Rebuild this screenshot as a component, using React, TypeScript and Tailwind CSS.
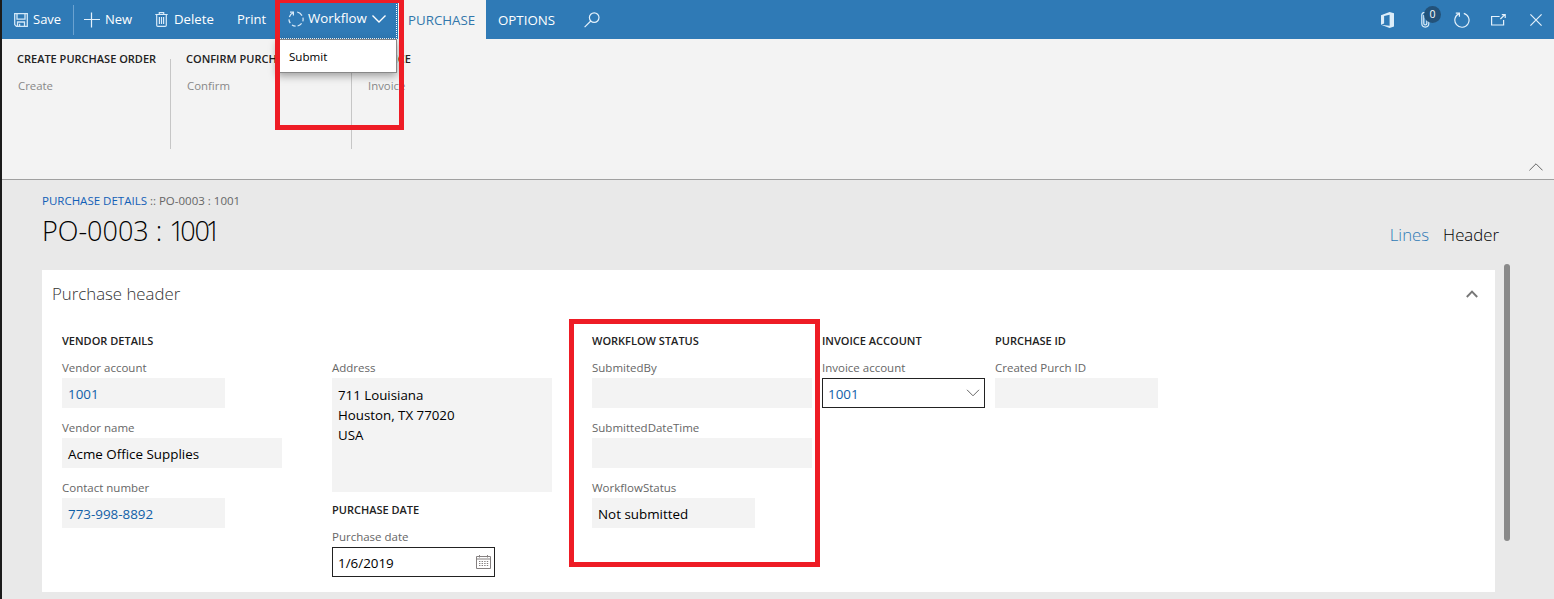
import type { ReactNode } from 'react'

function SaveIcon() {
  return (
    <svg width="14" height="14" viewBox="0 0 14 14" fill="none" stroke="#d3e8f8" strokeWidth="1.3">
      <path d="M.7 .7h12.6v12.6H2.4L.7 11.6z" />
      <path d="M3 .7v5.4h8V.7" />
      <path d="M3.5 13.4V9h7v4.4M5.6 13v-2.2" />
    </svg>
  )
}

function PlusIcon() {
  return (
    <svg width="16" height="16" viewBox="0 0 16 16" stroke="#e4f1fb" strokeWidth="1.2">
      <path d="M7.5 .5v15M0 7.5h16" />
    </svg>
  )
}

function TrashIcon() {
  return (
    <svg width="13" height="15" viewBox="0 0 13 15" fill="none" stroke="#d9ebf9" strokeWidth="1.2">
      <path d="M.3 2.5h12.4M4.3 2.4V.7h4.4v1.7M1.7 2.8v10.4c0 .8.5 1.2 1.2 1.2h7.2c.7 0 1.2-.4 1.2-1.2V2.8" />
      <path d="M4.4 5v7M6.5 5v7M8.6 5v7" />
    </svg>
  )
}

function WorkflowIcon() {
  return (
    <svg width="16" height="16" viewBox="0 0 16 16" fill="none" stroke="#d9ebf9" strokeWidth="1.2">
      <path d="M2 1.2h3.4v3.4" />
      <path d="M5.2 1.6A7 7 0 0 0 1.4 6M.9 8.4a7 7 0 0 0 1.4 3.8M4 13.9a7 7 0 0 0 3.6 1.2M9.6 15a7 7 0 0 0 4-2.6M14.8 10.4a7 7 0 0 0 .1-3.8M14 4.6A7 7 0 0 0 9.2 1" />
    </svg>
  )
}

function SearchIcon() {
  return (
    <svg width="16" height="16" viewBox="0 0 16 16" fill="none" stroke="#e4f1fb" strokeWidth="1.2">
      <circle cx="10.2" cy="5.6" r="4.8" />
      <path d="M6.8 9L.6 15.2" />
    </svg>
  )
}

function OfficeIcon() {
  return (
    <svg width="14" height="16" viewBox="0 0 14 16" fill="#dcedf9">
      <path d="M0 3.2L8.6 0 13 1.3v13.3L8.6 16 0 12.8l8.6 1V2.8L3.1 4.1v7.3L0 12.7z" />
    </svg>
  )
}

function ClipIcon() {
  return (
    <svg width="9" height="16" viewBox="0 0 9 16" fill="none" stroke="#dcedf9" strokeWidth="1.2">
      <path d="M.8 3v8.6a3.5 3.5 0 0 0 7 0V3M2.8 3v8.4a1.5 1.5 0 0 0 3 0V3M.8 3a2.5 2.5 0 0 1 5 0" />
    </svg>
  )
}

function RefreshIcon() {
  return (
    <svg width="16" height="16" viewBox="0 0 16 16" fill="none" stroke="#e4f1fb" strokeWidth="1.2">
      <path d="M1.8 1.2h3.6v3.6" />
      <path d="M5.2 1.6A7.1 7.1 0 1 0 9.8 1.3" />
    </svg>
  )
}

function PopoutIcon() {
  return (
    <svg width="15" height="12" viewBox="0 0 15 12" fill="none" stroke="#e4f1fb" strokeWidth="1.2">
      <path d="M8.6 2.5H.6v8.5h12V6" />
      <path d="M9.4 5L13.6 .9M10.8 .7h3.4v3.4" />
    </svg>
  )
}

function CloseIcon() {
  return (
    <svg width="12" height="12" viewBox="0 0 12 12" stroke="#e4f1fb" strokeWidth="1.2">
      <path d="M.4 .4l11.2 11.2M11.6 .4L.4 11.6" />
    </svg>
  )
}

function CalendarIcon() {
  return (
    <svg width="15" height="14" viewBox="0 0 15 14" fill="none" stroke="#858080">
      <path d="M.5 1.5h14v12H.5zM.5 4h14M3.5 0v2.5M11.5 0v2.5" />
      <path d="M3 6.5h9.5M3 8.5h9.5M3 10.5h9.5" strokeDasharray="1.4 1.2" />
    </svg>
  )
}

function Heading({ children }: { children: ReactNode }) {
  return <h3 className="h-4 whitespace-nowrap text-[11px] leading-4 font-semibold text-[#222]">{children}</h3>
}

type FieldProps = {
  label: string
  value?: string
  wide?: boolean
  link?: boolean
  editable?: boolean
  icon?: ReactNode
}

function Field({ label, value, wide, link, editable, icon }: FieldProps) {
  return (
    <div className={wide ? 'w-[220px]' : 'w-[163px]'}>
      <div className="h-5 text-[11.5px] leading-5 whitespace-nowrap text-[#666]">{label}</div>
      <div
        className={`flex h-[30px] items-center justify-between text-[13.4px] ${
          editable ? 'border border-[#222] bg-white pr-[3px] pl-[5px]' : 'bg-[#f3f3f3] px-1.5'
        } ${link ? 'text-[#1160a7]' : 'text-black'}`}
      >
        <span className="pt-[3px]">{value}</span>
        {icon}
      </div>
    </div>
  )
}

function CommandBar() {
  return (
    <header className="flex h-[39px] items-center bg-[#2f7ab6] text-[13px] text-white">
      <button className="flex w-[71px] items-center gap-[5px] pl-3">
        <SaveIcon />
        <span>Save</span>
      </button>
      <div className="h-[30px] w-px bg-[#6ba2d0]" />
      <button className="flex w-[72px] items-center gap-[5px] pl-2.5">
        <PlusIcon />
        <span>New</span>
      </button>
      <button className="flex w-20 items-center gap-1.5 pl-[9px]">
        <TrashIcon />
        <span className="text-[13.2px]">Delete</span>
      </button>
      <button className="w-[51px] pl-[11px] text-left">Print</button>
      <div className="relative h-full w-[121px]">
        <button className="flex h-full w-[120px] items-center gap-1 border-r border-b border-dotted border-white pl-[11px] font-medium">
          <WorkflowIcon />
          <span className="w-[60px] text-left text-[13.3px]">Workflow</span>
          <svg width="14" height="8" viewBox="0 0 14 8" fill="none" stroke="white" strokeWidth="1.4">
            <path d="M.5 .6L7 7 13.5 .6" />
          </svg>
        </button>
        <div className="absolute top-[39px] left-0 z-10 h-[34px] w-[120px] border-t border-r border-b border-[#888] bg-white pt-px pl-3 text-[11.6px] leading-8 text-black shadow-[0_3px_8px_rgba(0,0,0,0.35)]">
          Submit
        </div>
      </div>
      <nav className="flex h-full items-center text-[13.3px]">
        <button className="h-full w-[88px] bg-[#f3f3f3] pt-0.5 pl-2.5 text-left text-[#3277ab]">PURCHASE</button>
        <button className="w-[98px] pt-0.5 pl-3 text-left">OPTIONS</button>
        <SearchIcon />
      </nav>
      <div className="ml-auto flex items-center pr-3">
        <OfficeIcon />
        <div className="relative ml-[26px]">
          <ClipIcon />
          <span className="absolute -top-[6px] left-[3px] h-[17px] w-[17px] rounded-full bg-[#23527a] text-center text-[10.5px] leading-[17px] font-medium">
            0
          </span>
        </div>
        <div className="ml-6"><RefreshIcon /></div>
        <div className="ml-[21px]"><PopoutIcon /></div>
        <div className="ml-6"><CloseIcon /></div>
      </div>
    </header>
  )
}

function Ribbon() {
  return (
    <section className="relative flex h-[141px] border-b border-[#a0a0a0] bg-[#f3f3f3] pt-3">
      <div className="w-[168px] pl-[15px]">
        <Heading>CREATE PURCHASE ORDER</Heading>
        <div className="mt-[11px] pl-px text-[11.4px] leading-4 text-[#888]">Create</div>
      </div>
      <div className="mt-2 h-[90px] w-px bg-[#c6c6c6]" />
      <div className="w-[180px] pl-[15px]">
        <Heading>CONFIRM PURCHASE</Heading>
        <div className="mt-[11px] pl-px text-[11.4px] leading-4 text-[#888]">Confirm</div>
      </div>
      <div className="mt-2 h-[90px] w-px bg-[#c6c6c6]" />
      <div className="pl-[15px]">
        <Heading>INVOICE</Heading>
        <div className="mt-[11px] pl-px text-[11.4px] leading-4 text-[#888]">Invoice</div>
      </div>
      <div className="mt-auto mr-[11px] mb-2 ml-auto">
        <svg width="14" height="8" viewBox="0 0 14 8" fill="none" stroke="#666">
          <path d="M.4 7.4L7 .8l6.6 6.6" />
        </svg>
      </div>
    </section>
  )
}

function PurchaseHeader() {
  return (
    <section className="h-[322px] w-[1453px] bg-white">
      <div className="flex h-12 items-center justify-between pr-[17px] pl-2.5">
        <h2 className="text-[16.8px] font-light text-[#333]">Purchase header</h2>
        <svg width="12" height="8" viewBox="0 0 12 8" fill="none" stroke="#777" strokeWidth="1.9">
          <path d="M.8 7L6 1.6 11.2 7" />
        </svg>
      </div>
      <div className="flex pt-[15px] pl-5">
        <div className="flex w-[270px] flex-col">
          <Heading>VENDOR DETAILS</Heading>
          <div className="mt-[9px] flex flex-col gap-2.5">
            <Field label="Vendor account" value="1001" link />
            <Field label="Vendor name" value="Acme Office Supplies" wide />
            <Field label="Contact number" value="773-998-8892" link />
          </div>
        </div>
        <div className="w-[260px]">
          <div className="mt-[25px] w-[220px]">
            <div className="h-5 text-[11.5px] leading-5 text-[#666]">Address</div>
            <div className="h-[114px] bg-[#f3f3f3] px-1.5 pt-[7px] text-[13.3px] leading-5 whitespace-pre-line text-black">
              {'711 Louisiana\nHouston, TX 77020\nUSA'}
            </div>
          </div>
          <div className="mt-2.5">
            <Heading>PURCHASE DATE</Heading>
            <div className="mt-[9px]">
              <Field label="Purchase date" value="1/6/2019" editable icon={<CalendarIcon />} />
            </div>
          </div>
        </div>
        <div className="relative w-[230px]">
          <Heading>WORKFLOW STATUS</Heading>
          <div className="mt-[9px] flex flex-col gap-2.5">
            <Field label="SubmitedBy" wide />
            <Field label="SubmittedDateTime" wide />
            <Field label="WorkflowStatus" value="Not submitted" />
          </div>
          <div className="absolute -top-[14px] -left-[23px] h-[248px] w-[251px] border-5 border-[#ee1c25]" />
        </div>
        <div className="w-[173px]">
          <Heading>INVOICE ACCOUNT</Heading>
          <div className="mt-[9px]">
            <Field
              label="Invoice account"
              value="1001"
              link
              editable
              icon={
                <svg className="mr-px" width="14" height="8" viewBox="0 0 14 8" fill="none" stroke="#666">
                  <path d="M1 .8l6 6 6-6" />
                </svg>
              }
            />
          </div>
        </div>
        <div>
          <Heading>PURCHASE ID</Heading>
          <div className="mt-[9px]">
            <Field label="Created Purch ID" />
          </div>
        </div>
      </div>
    </section>
  )
}

export default function App() {
  return (
    <div className="relative h-[599px] w-[1554px] overflow-hidden border-l-2 border-[#1b1b1b] bg-[#e9e9e9] font-['Open_Sans','Noto_Sans',sans-serif]">
      <CommandBar />
      <Ribbon />
      <main className="flex pl-10">
        <div className="w-[1457px]">
          <div className="mt-3 h-[18px] text-[11.5px] leading-[18px] text-[#666]">
            <a className="text-[#1160b7]">PURCHASE DETAILS</a> :: PO-0003 : 1001
          </div>
          <div className="flex h-[60px] justify-between">
            {/* the narrow ones sit closer than the zeros */}
            <h1 className="pt-[3px] text-[27px] leading-9 font-light text-black">
              PO-0003 : <span className="tracking-[-4.5px]">1</span>
              <span className="tracking-[-1px]">0</span>
              <span className="tracking-[-4.5px]">0</span>1
            </h1>
            <div className="flex gap-[14px] pt-[13px] text-[16.8px] leading-6 font-light">
              <a className="text-[#2f7ab6]">Lines</a>
              <span className="text-black">Header</span>
            </div>
          </div>
          <PurchaseHeader />
        </div>
        <div className="mt-[84px] ml-[5px] h-[277px] w-1.5 rounded-full bg-[#8a8a8a]" />
      </main>
      <div className="absolute -top-[2px] left-[273px] z-20 h-[132px] w-[129px] border-5 border-[#ee1c25]" />
    </div>
  )
}
